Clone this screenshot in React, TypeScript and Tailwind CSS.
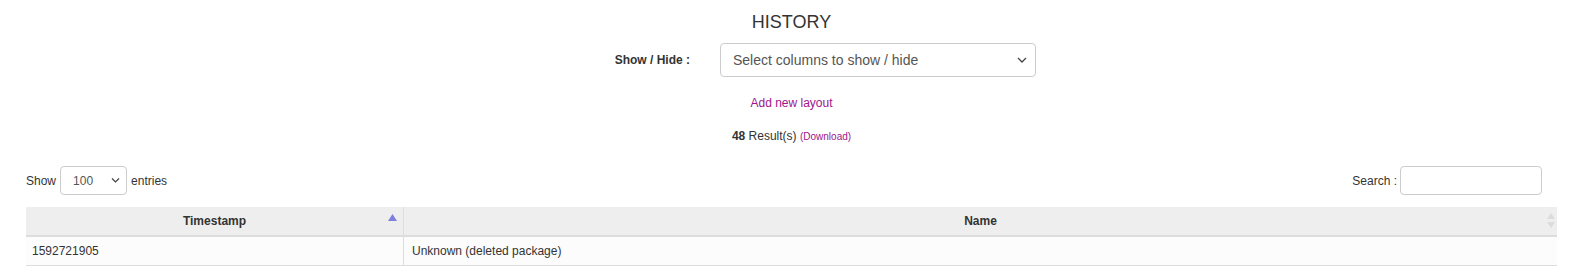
import React from "react";

export default function App() {
  const font = { fontFamily: '"Liberation Sans", Arial, sans-serif' };
  return (
    <div className="w-[1569px] h-[266px] bg-white text-[#333] overflow-hidden" style={font}>
      <div className="ml-[26px] w-[1531px]">
        <div className="pt-[12px] text-center text-[18px] leading-[20px] text-[#333]">HISTORY</div>
        <div className="mt-[11px] flex items-center h-[34px]">
          <div className="w-[664px] text-right text-[12px] font-bold text-[#333] leading-[14px]">Show / Hide :</div>
          <div className="ml-[30px] w-[316px] h-[34px] rounded-[4px] border border-[#ccc] flex items-center justify-between pl-[12px] pr-[8px] text-[14px] text-[#555]">
            <span>Select columns to show / hide</span>
            <svg width="10" height="6" viewBox="0 0 10 6" fill="none" stroke="#444" strokeWidth="1.3">
              <path d="M1 1l4 4 4-4" />
            </svg>
          </div>
        </div>
        <div className="mt-[19px] text-center text-[12px] leading-[14px] text-[#a0158c]">Add new layout</div>
        <div className="mt-[19px] text-center text-[12px] leading-[14px] text-[#333]">
          <span className="font-bold">48</span> Result(s){" "}
          <span className="text-[10px] text-[#a0158c]">(Download)</span>
        </div>
        <div className="mt-[22px] flex items-center justify-between h-[29px] w-[1516px] text-[12px]">
          <div className="flex items-center">
            <span>Show</span>
            <div className="ml-[4px] w-[67px] h-[29px] rounded-[4px] border border-[#ccc] flex items-center justify-between pl-[12px] pr-[6px] text-[12px] text-[#555]">
              <span>100</span>
              <svg width="9" height="5" viewBox="0 0 9 5" fill="none" stroke="#444" strokeWidth="1.2">
                <path d="M1 0.5l3.5 3.5 3.5-3.5" />
              </svg>
            </div>
            <span className="ml-[4px]">entries</span>
          </div>
          <div className="flex items-center">
            <span>Search :</span>
            <div className="ml-[3px] w-[142px] h-[29px] rounded-[4px] border border-[#ccc] bg-white" />
          </div>
        </div>
        <div className="mt-[12px] text-[12px]">
          <div className="flex h-[28px] bg-[#eeeeee] border-b-2 border-[#dddddd] box-content">
            <div className="relative w-[378px] border-r border-[#dddddd] flex items-center justify-center font-bold">
              Timestamp
              <svg className="absolute right-[6px] top-[7px]" width="9" height="7" viewBox="0 0 9 7">
                <path d="M4.5 0L9 7H0z" fill="#7f7fde" />
              </svg>
            </div>
            <div className="relative flex-1 flex items-center justify-center font-bold">
              Name
              <svg className="absolute right-[2px] top-[6px]" width="8" height="16" viewBox="0 0 8 16">
                <path d="M4 0L8 6H0z" fill="#dcdcdc" />
                <path d="M4 15L8 9H0z" fill="#dcdcdc" />
              </svg>
            </div>
          </div>
          <div className="flex h-[28px] bg-[#fcfcfc] border-b border-[#dddddd] box-content">
            <div className="w-[378px] border-r border-[#dddddd] flex items-center pl-[6px]">1592721905</div>
            <div className="flex-1 flex items-center pl-[8px]">Unknown (deleted package)</div>
          </div>
        </div>
      </div>
    </div>
  );
}
